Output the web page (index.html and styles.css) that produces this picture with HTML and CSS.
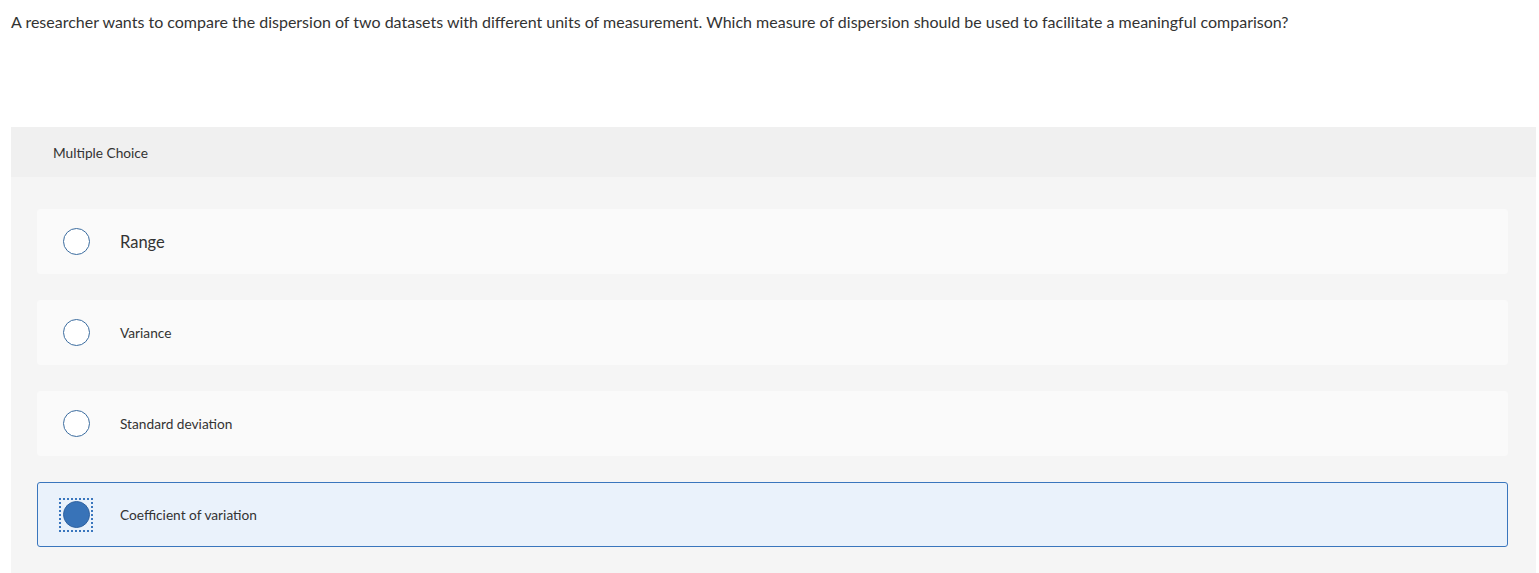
FILE: index.html
```html
<!DOCTYPE html>
<html lang="en">
<head>
<meta charset="utf-8">
<title>Multiple Choice</title>
<link rel="stylesheet" href="styles.css">
</head>
<body>
<div class="page">
  <p class="question">A researcher wants to compare the dispersion of two datasets with different units of measurement. Which measure of dispersion should be used to facilitate a meaningful comparison?</p>
  <section class="panel">
    <header class="panel-head">Multiple Choice</header>
    <div class="options">
      <label class="option">
        <span class="radio-wrap"><span class="radio"></span></span>
        <span class="label big">Range</span>
      </label>
      <label class="option">
        <span class="radio-wrap"><span class="radio"></span></span>
        <span class="label">Variance</span>
      </label>
      <label class="option">
        <span class="radio-wrap"><span class="radio"></span></span>
        <span class="label">Standard deviation</span>
      </label>
      <label class="option selected">
        <span class="radio-wrap focus"><span class="radio checked"></span></span>
        <span class="label">Coefficient of variation</span>
      </label>
    </div>
  </section>
</div>
</body>
</html>
```
FILE: styles.css
```css
html, body {
  margin: 0;
  padding: 0;
  background: #ffffff;
}
body {
  font-family: Lato, "Open Sans", Arial, sans-serif;
  color: #333333;
}
.page {
  padding: 0 3px 0 11px;
}
.question {
  margin: 0;
  padding-top: 12px;
  font-size: 16px;
  line-height: 20px;
  height: 115px;
}
.panel {
  background: #f5f5f5;
  padding-bottom: 30px;
}
.panel-head {
  background: #f0f0f0;
  height: 50px;
  display: flex;
  align-items: center;
  padding-left: 42px;
  font-size: 13.7px;
}
.options {
  display: flex;
  flex-direction: column;
  gap: 26px;
  padding: 32px 28px 0 26px;
}
.option {
  display: flex;
  align-items: center;
  height: 65px;
  box-sizing: border-box;
  background: #fafafa;
  border: 1px solid #fafafa;
  border-radius: 3px;
  padding-left: 21px;
}
.option.selected {
  background: #eaf2fb;
  border-color: #3a76bd;
}
.radio-wrap {
  width: 34px;
  height: 34px;
  display: flex;
  align-items: center;
  justify-content: center;
  box-sizing: border-box;
  border: 2px dotted transparent;
}
.radio-wrap.focus {
  border-color: #3a76bd;
}
.radio {
  width: 27px;
  height: 27px;
  box-sizing: border-box;
  border-radius: 50%;
  border: 1.5px solid #3b6c9f;
  background: #ffffff;
}
.radio.checked {
  background: #3873b8;
  border-color: #2f62a0;
}
.label {
  margin-left: 27px;
  font-size: 13.7px;
}
.label.big {
  font-size: 16.5px;
}
```
